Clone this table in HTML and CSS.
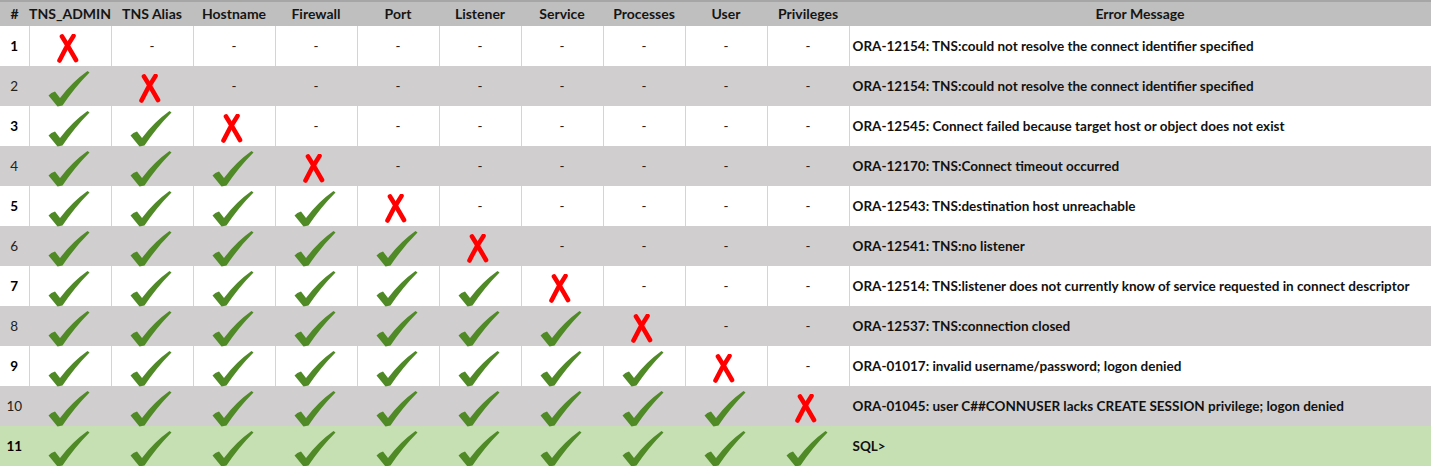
FILE: index.html
```html
<!DOCTYPE html>
<html>
<head>
<meta charset="utf-8">
<link rel="stylesheet" href="styles.css">
</head>
<body>
<svg width="0" height="0" class="defs">
  <defs>
    <symbol id="ok" viewBox="0 0 42 36">
      <path d="M0.5,24.5 Q3,21.5 7,20.5 L12,27 Q24,11 39.5,0 L41.5,1.5 Q27,16 14.5,34.5 L9.5,35.5 Z" fill="#4f8a27"/>
    </symbol>
    <symbol id="no" viewBox="0 0 22 29">
      <path d="M5,2.5 Q11,12 19,26" stroke="#ff0000" stroke-width="4.6" stroke-linecap="round" fill="none"/>
      <path d="M16.5,2 Q9,13 2.5,26.5" stroke="#ff0000" stroke-width="4.6" stroke-linecap="round" fill="none"/>
    </symbol>
  </defs>
</svg>
<table class="grid">
  <colgroup>
    <col class="c-num">
    <col class="c-step"><col class="c-step"><col class="c-step"><col class="c-step"><col class="c-step">
    <col class="c-step"><col class="c-step"><col class="c-step"><col class="c-step"><col class="c-step">
    <col class="c-msg">
  </colgroup>
  <thead>
    <tr>
      <th>#</th><th>TNS_ADMIN</th><th>TNS Alias</th><th>Hostname</th><th>Firewall</th><th>Port</th>
      <th>Listener</th><th>Service</th><th>Processes</th><th>User</th><th>Privileges</th><th>Error Message</th>
    </tr>
  </thead>
  <tbody id="rows"></tbody>
</table>
<script src="app.js"></script>
</body>
</html>
```
FILE: styles.css
```css
html, body {
  margin: 0;
  padding: 0;
  background: #ffffff;
}
.defs {
  position: absolute;
  width: 0;
  height: 0;
  overflow: hidden;
}
.grid {
  border-collapse: collapse;
  table-layout: fixed;
  width: 1431px;
  font-family: "Lato", "Open Sans", sans-serif;
  font-size: 13.5px;
  line-height: 16px;
  color: #111;
}
.c-num { width: 29px; }
.c-step { width: 82px; }
.c-msg { width: auto; }
.grid th {
  height: 25px;
  padding: 0;
  background: #bfbfbf;
  border-top: 2px solid #a6a6a6;
  font-weight: 700;
  font-size: 14px;
  text-align: center;
  box-sizing: border-box;
  color: #151515;
}
.grid td {
  height: 40px;
  box-sizing: border-box;
  padding: 0;
  text-align: center;
  vertical-align: middle;
  border-left: 1px solid #d4d4d4;
}
.grid td:first-child { border-left: none; }
.grid tr.odd td { background: #ffffff; }
.grid tr.even td { background: #d0cece; border-left-color: #d0cece; }
.grid tr.done td { background: #c6e0b4; border-left-color: #c6e0b4; }
.num { font-weight: 400; color: #222; }
tr.odd .num, tr.done .num { font-weight: 700; color: #000; }
.dash { color: #222; }
.grid td.msg {
  text-align: left;
  padding-left: 3px;
  font-weight: 700;
  color: #111;
}
.ico-ok {
  display: block;
  margin: 0 auto;
  width: 42px;
  height: 36px;
  position: relative;
  left: -1px;
  top: 3px;
}
.ico-no {
  display: block;
  margin: 0 auto;
  width: 22px;
  height: 29px;
  position: relative;
  left: -2px;
  top: 2px;
}
```
FILE: app.js
```js
const msgs = [
  "ORA-12154: TNS:could not resolve the connect identifier specified",
  "ORA-12154: TNS:could not resolve the connect identifier specified",
  "ORA-12545: Connect failed because target host or object does not exist",
  "ORA-12170: TNS:Connect timeout occurred",
  "ORA-12543: TNS:destination host unreachable",
  "ORA-12541: TNS:no listener",
  "ORA-12514: TNS:listener does not currently know of service requested in connect descriptor",
  "ORA-12537: TNS:connection closed",
  "ORA-01017: invalid username/password; logon denied",
  "ORA-01045: user C##CONNUSER lacks CREATE SESSION privilege; logon denied",
  "SQL>"
];
const body = document.getElementById("rows");
const okSvg = '<svg class="ico-ok"><use href="#ok"/></svg>';
const noSvg = '<svg class="ico-no"><use href="#no"/></svg>';
msgs.forEach((m, i) => {
  const n = i + 1;
  const tr = document.createElement("tr");
  tr.className = n === 11 ? "done" : (n % 2 ? "odd" : "even");
  let html = '<td class="num">' + n + '</td>';
  for (let c = 1; c <= 10; c++) {
    if (c < n) html += '<td>' + okSvg + '</td>';
    else if (c === n) html += '<td>' + noSvg + '</td>';
    else html += '<td class="dash">-</td>';
  }
  const td = document.createElement("td");
  td.className = "msg";
  td.textContent = m;
  tr.innerHTML = html;
  tr.appendChild(td);
  body.appendChild(tr);
});
```
